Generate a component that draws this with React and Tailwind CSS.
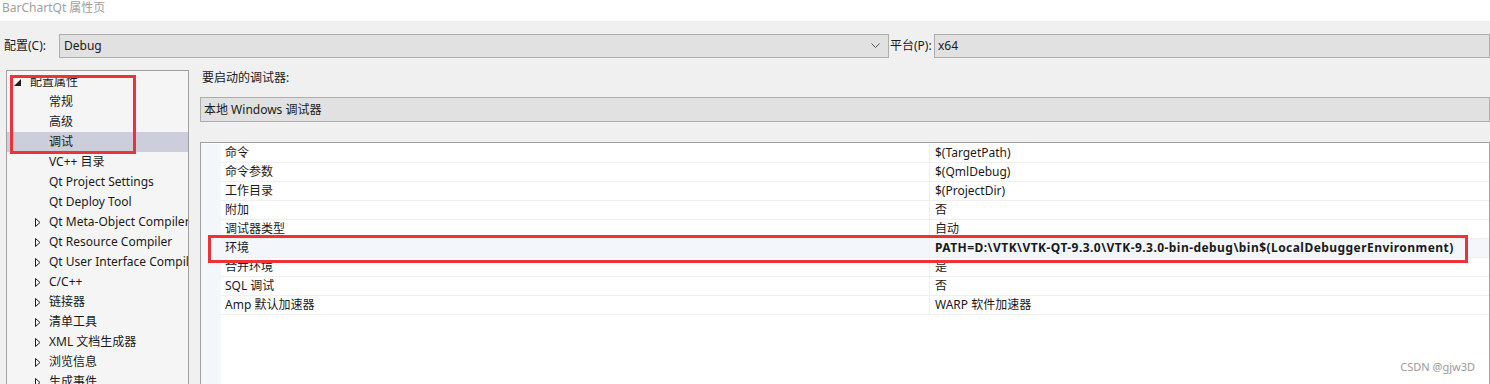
const tree = [
  { label: "配置属性", open: true, level: 0 },
  { label: "常规", level: 1 },
  { label: "高级", level: 1 },
  { label: "调试", level: 1, selected: true },
  { label: "VC++ 目录", level: 1 },
  { label: "Qt Project Settings", level: 1 },
  { label: "Qt Deploy Tool", level: 1 },
  { label: "Qt Meta-Object Compiler", level: 1, closed: true },
  { label: "Qt Resource Compiler", level: 1, closed: true },
  { label: "Qt User Interface Compiler", level: 1, closed: true },
  { label: "C/C++", level: 1, closed: true },
  { label: "链接器", level: 1, closed: true },
  { label: "清单工具", level: 1, closed: true },
  { label: "XML 文档生成器", level: 1, closed: true },
  { label: "浏览信息", level: 1, closed: true },
  { label: "生成事件", level: 1, closed: true },
];

const props = [
  ["命令", "$(TargetPath)"],
  ["命令参数", "$(QmlDebug)"],
  ["工作目录", "$(ProjectDir)"],
  ["附加", "否"],
  ["调试器类型", "自动"],
  ["环境", "PATH=D:\\VTK\\VTK-QT-9.3.0\\VTK-9.3.0-bin-debug\\bin$(LocalDebuggerEnvironment)", true],
  ["合并环境", "是"],
  ["SQL 调试", "否"],
  ["Amp 默认加速器", "WARP 软件加速器"],
];

function TreeRow({ item }) {
  if (item.level === 0) {
    return (
      <div className="flex h-5 items-center whitespace-nowrap pl-[7px]">
        <svg width="7" height="7" viewBox="0 0 7 7" className="mr-[9px]">
          <path d="M7 0 L7 7 L0 7 Z" fill="#1e1e1e" />
        </svg>
        <span>{item.label}</span>
      </div>
    );
  }
  return (
    <div
      className={
        "flex h-5 items-center whitespace-nowrap pl-[28px] " +
        (item.selected ? "bg-[#cccedb]" : "")
      }
    >
      <span className="flex w-[6px] shrink-0 items-center">
        {item.closed && (
          <svg width="6" height="9" viewBox="0 0 6 9">
            <path d="M0.5 0.5 L5 4.5 L0.5 8.5 Z" fill="none" stroke="#1e1e1e" />
          </svg>
        )}
      </span>
      <span className="ml-[8px]">{item.label}</span>
    </div>
  );
}

export default function App() {
  return (
    <div
      className="relative h-[384px] w-[1490px] overflow-hidden bg-[#f0f0f0] text-[12px] text-[#1a1a1a]"
      style={{ fontFamily: '"Noto Sans", "Noto Sans CJK SC", sans-serif' }}
    >
      <div className="h-[21px] bg-white pl-[2px] leading-[16px] text-[#a0a0a0]">
        BarChartQt 属性页
      </div>

      <div className="mt-[13px] flex h-6 items-center">
        <span className="w-[59px] pl-1">配置(C):</span>
        <div className="flex h-6 w-[830px] items-center justify-between border border-[#adadad] bg-[#e1e1e1] pl-[4px] pr-[8px]">
          <span>Debug</span>
          <svg width="9" height="6" viewBox="0 0 9 6">
            <path d="M0.5 0.5 L4.5 4.5 L8.5 0.5" fill="none" stroke="#555" />
          </svg>
        </div>
        <span className="w-[45px] pl-[1px]">平台(P):</span>
        <div className="flex h-6 flex-1 items-center border border-[#adadad] bg-[#e1e1e1] pl-[3px]">
          x64
        </div>
      </div>

      <div className="mt-3 flex">
        <div className="ml-[6px] h-[320px] w-[183px] overflow-hidden border border-[#a0a0a0] bg-[#f5f5f5] pt-[1px]">
          {tree.map((t) => (
            <TreeRow key={t.label} item={t} />
          ))}
        </div>

        <div className="ml-[11px] flex-1">
          <div className="pl-[2px] pt-[1px] leading-[14px]">要启动的调试器:</div>
          <div className="mt-[12px] flex h-[25px] items-center border border-[#adadad] bg-[#e1e1e1] pl-[3px]">
            本地 Windows 调试器
          </div>
          <div className="mt-[20px] flex h-[260px] border border-[#a0a0a0] bg-white pt-[1px]">
            <div className="w-[20px] shrink-0 bg-[#f3f6fb]" />
            <div className="flex-1">
              {props.map(([k, v, hl]) => (
                <div
                  key={k}
                  className={
                    "flex h-[19px] items-center border-b border-[#f0f0f0] " +
                    (hl ? "bg-[#f3f6fb]" : "")
                  }
                >
                  <span className="w-[709px] shrink-0 border-r border-[#f0f0f0] pl-[4px]">{k}</span>
                  <span className={"whitespace-nowrap pl-[5px] " + (hl ? "font-bold tracking-[0.45px]" : "")}>{v}</span>
                </div>
              ))}
            </div>
          </div>
        </div>
      </div>

      <div className="pointer-events-none absolute left-[10px] top-[75px] h-[79px] w-[126px] border-[3px] border-[#ee3338]" />
      <div className="pointer-events-none absolute left-[208px] top-[235px] h-[28px] w-[1260px] border-[3px] border-[#ee3338]" />

      <div className="absolute bottom-[9px] right-[15px] text-[11px] text-[#9a9a9a]">CSDN @gjw3D</div>
    </div>
  );
}
